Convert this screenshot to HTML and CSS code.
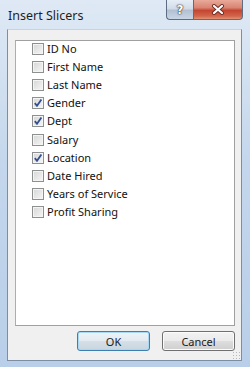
FILE: index.html
```html
<!DOCTYPE html>
<html lang="en">
<head>
    <meta charset="UTF-8">
    <meta name="viewport" content="width=device-width, initial-scale=1.0">
    <title>Insert Slicers</title>
    <link rel="stylesheet" href="styles.css">
</head>
<body>
    <div class="window">
        <div class="titlebar">
            <span class="title">Insert Slicers</span>
            <div class="caption-buttons">
                <div class="cap-btn help"><span>?</span></div>
                <div class="cap-btn close">
                    <svg width="14" height="11" viewBox="0 0 14 11">
                        <path d="M3 2 L11 9 M11 2 L3 9" stroke="#6b2a22" stroke-width="4" stroke-linecap="round"/>
                        <path d="M3 2 L11 9 M11 2 L3 9" stroke="#fff" stroke-width="2.2" stroke-linecap="round"/>
                    </svg>
                </div>
            </div>
        </div>

        <div class="client">
            <ul class="field-list">
                <li><span class="checkbox"></span>ID No</li>
                <li><span class="checkbox"></span>First Name</li>
                <li><span class="checkbox"></span>Last Name</li>
                <li><span class="checkbox checked"></span>Gender</li>
                <li><span class="checkbox checked"></span>Dept</li>
                <li><span class="checkbox"></span>Salary</li>
                <li><span class="checkbox checked"></span>Location</li>
                <li><span class="checkbox"></span>Date Hired</li>
                <li><span class="checkbox"></span>Years of Service</li>
                <li><span class="checkbox"></span>Profit Sharing</li>
            </ul>
            <div class="button-row">
                <button class="btn default">OK</button>
                <button class="btn">Cancel</button>
            </div>
            <div class="grip"></div>
        </div>
    </div>
</body>
</html>
```

FILE: styles.css
```css
body {
    margin: 0;
    padding: 0;
    font-family: 'Noto Sans', 'Open Sans', sans-serif;
    color: #000;
    background: #c2d5ec;
}
.window {
    width: 250px;
    height: 367px;
    box-sizing: border-box;
    background: linear-gradient(to bottom, #dfe9f5 0%, #d3e1f1 20%, #c3d6ec 45%, #b9cfe9 100%);
    display: flex;
    flex-direction: column;
}
.titlebar {
    height: 29px;
    display: flex;
    align-items: flex-start;
    justify-content: space-between;
}
.title {
    font-size: 12.5px;
    margin: 7px 0 0 8px;
    color: #1e1e1e;
}
.caption-buttons {
    display: flex;
    margin-right: 7px;
}
.cap-btn {
    height: 20px;
    box-sizing: border-box;
    border: 1px solid #5d6c80;
    border-top: none;
    display: flex;
    align-items: center;
    justify-content: center;
}
.help {
    width: 27px;
    border-right: none;
    border-radius: 0 0 0 4px;
    background: linear-gradient(to bottom, #e6edf6 0%, #d2dce9 45%, #b2c0d2 55%, #c9d6e6 100%);
}
.help span {
    font-family: 'DejaVu Sans', sans-serif;
    font-weight: bold;
    font-size: 12px;
    color: #fff;
    text-shadow: 0 0 1px #333, 0 0 1px #333, 0 0 2px #556;
}
.close {
    width: 50px;
    border-radius: 0 0 4px 0;
    background: linear-gradient(to bottom, #e9a999 0%, #d98574 40%, #c44630 55%, #d2664a 85%, #e09276 100%);
}
.client {
    position: relative;
    flex: 1;
    margin: 0 8px 6px 7px;
    border: 1px solid #7d8ea3;
    border-top-color: #c9d3de;
    background: #f0f0f0;
    padding: 10px 6px 0 7px;
    display: flex;
    flex-direction: column;
}
.field-list {
    list-style: none;
    margin: 0;
    padding: 0;
    height: 286px;
    box-sizing: border-box;
    border: 1px solid #a0a0a0;
    border-left-color: #adadad;
    background: #fff;
}
.field-list li {
    height: 18.1px;
    box-sizing: border-box;
    padding-bottom: 3px;
    display: flex;
    align-items: center;
    padding-left: 17px;
    font-size: 11px;
    color: #111;
}
.checkbox {
    width: 12px;
    height: 12px;
    box-sizing: border-box;
    border: 1px solid #8e8f8f;
    margin: 1px 3px 0 -1px;
    background: linear-gradient(135deg, #d6d6d6 0%, #e9e9e9 60%, #f6f6f6 100%);
    box-shadow: inset 0 0 0 1px #f4f4f4;
    flex: none;
}
.checkbox.checked {
    background:
        url("data:image/svg+xml,%3Csvg xmlns='http://www.w3.org/2000/svg' width='10' height='10' viewBox='0 0 10 10'%3E%3Cpath d='M1.8 5.2 L4 7.8 L8.4 1.6' fill='none' stroke='%23324f92' stroke-width='1.8'/%3E%3C/svg%3E") center / 10px 10px no-repeat,
        linear-gradient(135deg, #d6d6d6 0%, #e9e9e9 60%, #f6f6f6 100%);
}
.button-row {
    display: flex;
    justify-content: flex-end;
    gap: 12px;
    margin-top: 5px;
}
.btn {
    width: 73px;
    height: 20px;
    box-sizing: border-box;
    font-family: 'Noto Sans', 'Open Sans', sans-serif;
    font-size: 11px;
    color: #1a1a1a;
    padding: 0;
    border: 1px solid #707070;
    border-radius: 3px;
    background: linear-gradient(to bottom, #f2f2f2 0%, #ebebeb 48%, #dddddd 52%, #cfcfcf 100%);
    box-shadow: inset 0 0 0 1px #fbfbfb;
}
.btn.default {
    border-color: #3c7fb1;
    background: linear-gradient(to bottom, #eef4f8 0%, #e3ebf1 48%, #d4dfe7 52%, #c9d6df 100%);
    box-shadow: inset 0 0 0 1px #a8d8f2;
}
.grip {
    position: absolute;
    right: 1px;
    bottom: 1px;
    width: 8px;
    height: 8px;
    background: radial-gradient(circle, #b8b8b8 0.8px, transparent 1px) 0 0 / 3px 3px;
}
```
